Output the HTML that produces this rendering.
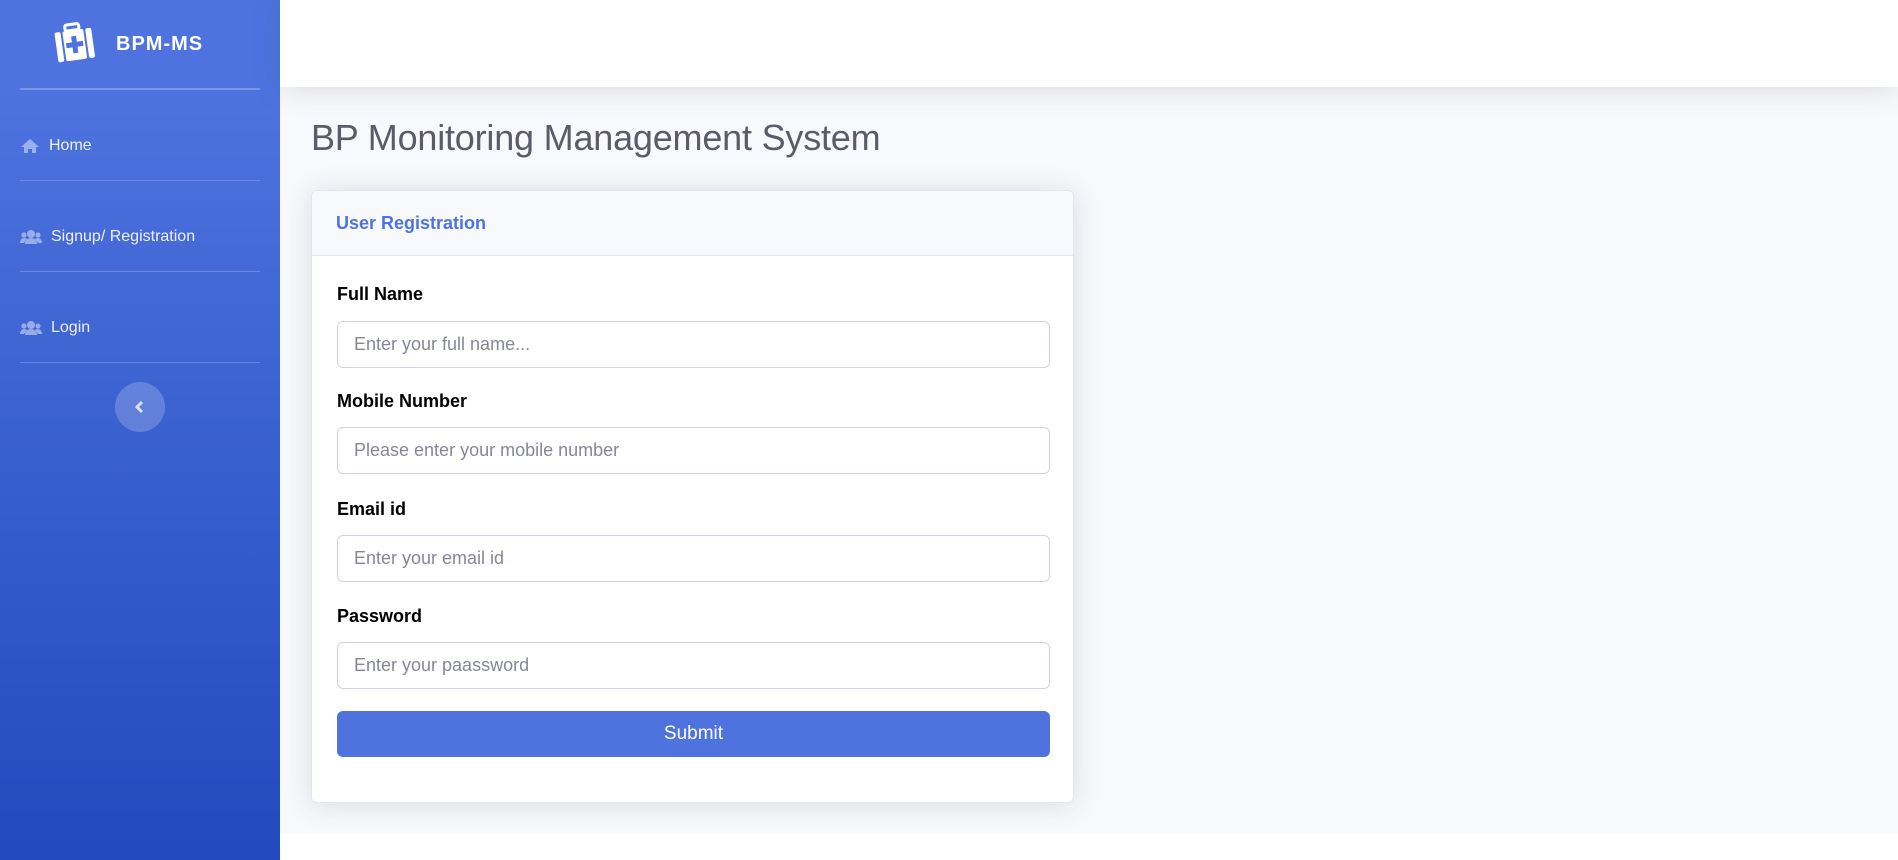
<!DOCTYPE html>
<html><head><meta charset="utf-8"><style>
*{box-sizing:border-box;margin:0;padding:0}
body{width:1898px;height:860px;overflow:hidden;font-family:"Liberation Sans",sans-serif;background:#fff;position:relative}
.sb{position:absolute;left:0;top:0;width:280px;height:860px;background:linear-gradient(180deg,#4e73df 10%,#224abe 100%)}
.brand{position:absolute;left:116px;top:33px;color:#fff;font-weight:bold;font-size:20px;letter-spacing:1px}
.hr{position:absolute;left:20px;width:240px;height:1px;background:rgba(255,255,255,.2)}
.hr.t{background:rgba(255,255,255,.25);height:2px}
.nav{position:absolute;left:20px;color:rgba(255,255,255,.9);font-size:16px;display:flex;align-items:center}
.nav svg{margin-right:9px}
.tog{position:absolute;left:115px;top:382px;width:50px;height:50px;border-radius:50%;background:rgba(255,255,255,.2);color:rgba(255,255,255,.6)}
.top{position:absolute;left:280px;top:0;width:1618px;height:87px;background:#fff;box-shadow:0 .15rem 1.75rem rgba(58,59,69,.15);z-index:2}
.main{position:absolute;left:280px;top:87px;width:1618px;height:746px;background:#f8f9fc}
h1{position:absolute;left:311px;top:117px;font-size:36px;font-weight:normal;color:#5a5c69;letter-spacing:-0.2px}
.card{position:absolute;left:311px;top:190px;width:763px;height:613px;background:#fff;border:1px solid #e3e6f0;border-radius:6px;box-shadow:0 .15rem 1.75rem rgba(58,59,69,.15);overflow:hidden}
.ch{height:65px;background:#f8f9fc;border-bottom:1px solid #e3e6f0;padding:22px 0 0 24px;color:#4e73df;font-weight:bold;font-size:18px}
.lbl{position:absolute;left:25px;font-weight:bold;font-size:18px;color:#000}
.inp{position:absolute;left:25px;width:713px;height:47px;border:1px solid #d1d3e2;border-radius:6px;padding:0 16px;line-height:45px;color:#858796;font-size:18px}
.btn{position:absolute;left:25px;top:520px;width:713px;height:46px;background:#4e73df;border-radius:6px;color:#fff;text-align:center;line-height:46px;font-size:19px}
</style></head><body>
<div class="sb">
<svg style="position:absolute;left:52px;top:22px" width="46" height="42" viewBox="0 0 46 42"><g transform="rotate(-8 23 21)" fill="#fff"><rect x="15" y="2" width="14" height="6" rx="2" fill="none" stroke="#fff" stroke-width="3"/><rect x="4" y="8" width="6" height="30" rx="2"/><rect x="12" y="8" width="21" height="30" rx="2"/><rect x="35" y="8" width="6" height="30" rx="2"/><rect x="20" y="14" width="5" height="17" fill="#4e73df"/><rect x="14" y="20" width="17" height="5" fill="#4e73df"/></g></svg>
<div class="brand">BPM-MS</div>
<div class="hr t" style="top:88px"></div>
<div class="nav" style="top:137px"><svg width="20" height="16" viewBox="0 0 20 16"><path d="M10 1L1 9h3v6h4v-4h4v4h4V9h3z" fill="rgba(255,255,255,.45)"/></svg>Home</div>
<div class="hr" style="top:180px"></div>
<div class="nav" style="top:228px"><svg width="22" height="16" viewBox="0 0 22 16" fill="rgba(255,255,255,.45)"><circle cx="11" cy="5" r="4"/><circle cx="4" cy="6" r="2.6"/><circle cx="18" cy="6" r="2.6"/><path d="M5 15c0-4 3-6 6-6s6 2 6 6z"/><path d="M0 14c0-3 2-5 4-5s3 1 3 1l-3 4z"/><path d="M22 14c0-3-2-5-4-5s-3 1-3 1l3 4z"/></svg>Signup/ Registration</div>
<div class="hr" style="top:271px"></div>
<div class="nav" style="top:319px"><svg width="22" height="16" viewBox="0 0 22 16" fill="rgba(255,255,255,.45)"><circle cx="11" cy="5" r="4"/><circle cx="4" cy="6" r="2.6"/><circle cx="18" cy="6" r="2.6"/><path d="M5 15c0-4 3-6 6-6s6 2 6 6z"/><path d="M0 14c0-3 2-5 4-5s3 1 3 1l-3 4z"/><path d="M22 14c0-3-2-5-4-5s-3 1-3 1l3 4z"/></svg>Login</div>
<div class="hr" style="top:362px"></div>
<div class="tog"><svg style="position:absolute;left:20px;top:18px" width="10" height="14" viewBox="0 0 10 14"><path d="M7 2L2 7l5 5" stroke="rgba(255,255,255,.75)" stroke-width="3" fill="none"/></svg></div>
</div>
<div class="top"></div>
<div class="main"></div>
<h1>BP Monitoring Management System</h1>
<div class="card">
<div class="ch">User Registration</div>
<div class="lbl" style="top:93px">Full Name</div>
<div class="inp" style="top:130px">Enter your full name...</div>
<div class="lbl" style="top:200px">Mobile Number</div>
<div class="inp" style="top:236px">Please enter your mobile number</div>
<div class="lbl" style="top:308px">Email id</div>
<div class="inp" style="top:344px">Enter your email id</div>
<div class="lbl" style="top:415px">Password</div>
<div class="inp" style="top:451px">Enter your paassword</div>
<div class="btn">Submit</div>
</div>
</body></html>
